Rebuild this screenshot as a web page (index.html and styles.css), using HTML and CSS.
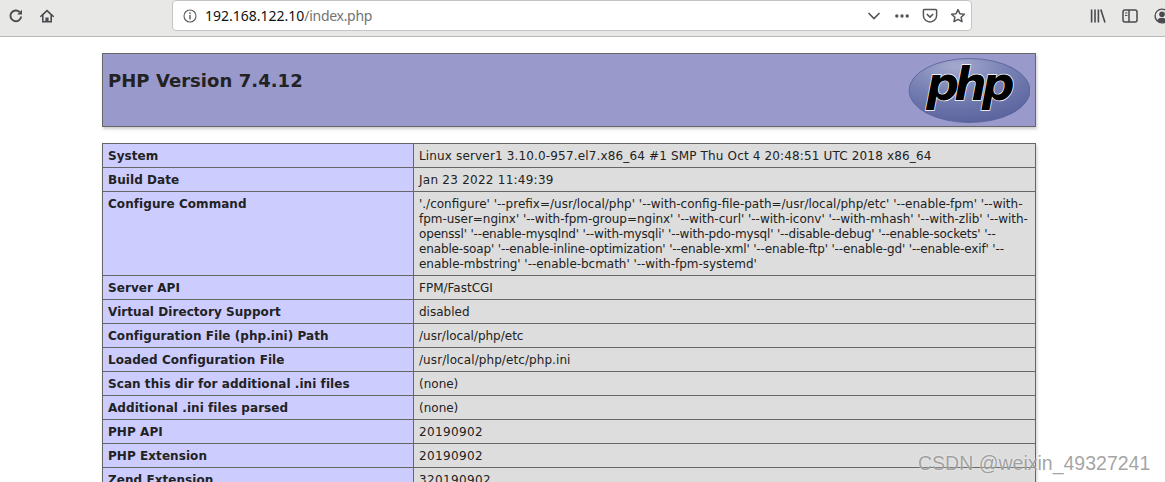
FILE: index.html
```html
<!DOCTYPE html>
<html lang="en">
<head>
<meta charset="utf-8">
<title>phpinfo()</title>
<link rel="stylesheet" href="styles.css">
</head>
<body>
<header class="toolbar">
  <div class="nav">
    <svg class="icon" viewBox="0 0 16 16"><path d="M13.2 8.5A5.4 5.4 0 1 1 11.6 4" fill="none" stroke="#4a4a4f" stroke-width="1.9"/><path d="M14 1.8V6.6H9.2Z" fill="#4a4a4f"/></svg>
    <svg class="icon" viewBox="0 0 16 16"><path d="M8 1.6 .8 8.2l1 1.1L3 8.3V14.6h10V8.3l1.2 1 1-1.1ZM4.6 13V6.9L8 3.8l3.4 3.1V13H9.6V9.6H6.4V13Z" fill="#4a4a4f"/></svg>
  </div>
  <div class="urlbar">
    <svg class="info-icon" viewBox="0 0 14 14"><circle cx="7" cy="7" r="6" fill="none" stroke="#5c5c60" stroke-width="1.1"/><circle cx="7" cy="4.1" r=".9" fill="#5c5c60"/><rect x="6.3" y="5.9" width="1.4" height="4.6" fill="#5c5c60"/></svg>
    <span class="url"><span class="host">192.168.122.10</span><span class="path">/index.php</span></span>
    <div class="url-actions">
      <svg class="icon" viewBox="0 0 16 16"><path d="M2.5 5 8 10.6 13.5 5" fill="none" stroke="#55555a" stroke-width="1.7"/></svg>
      <svg class="icon" viewBox="0 0 16 16"><circle cx="2.8" cy="8" r="1.7" fill="#55555a"/><circle cx="8" cy="8" r="1.7" fill="#55555a"/><circle cx="13.2" cy="8" r="1.7" fill="#55555a"/></svg>
      <svg class="icon" viewBox="0 0 16 16"><path d="M2.4 1.4h11.2c.6 0 1 .4 1 1v5a6.6 6.6 0 0 1-13.2 0v-5c0-.6.4-1 1-1Z" fill="none" stroke="#55555a" stroke-width="1.5"/><path d="M4.8 6 8 9l3.2-3" fill="none" stroke="#55555a" stroke-width="1.7"/></svg>
      <svg class="icon" viewBox="0 0 16 16"><path d="M8 1.6 9.9 5.7l4.5.5-3.3 3 .9 4.5L8 11.4l-4 2.3.9-4.5-3.3-3 4.5-.5Z" fill="none" stroke="#55555a" stroke-width="1.5" stroke-linejoin="round"/></svg>
    </div>
  </div>
  <div class="tools">
    <svg class="icon" viewBox="0 0 16 16"><path d="M1.6 1.5V14.5M5 1.5V14.5M8.4 1.5V14.5M10.8 1.6 15 14.5" fill="none" stroke="#4a4a4f" stroke-width="1.6"/></svg>
    <svg class="icon" viewBox="0 0 16 16"><rect x="1" y="2" width="14" height="12" rx="2" fill="none" stroke="#4a4a4f" stroke-width="1.5"/><path d="M7 2V14" stroke="#4a4a4f" stroke-width="1.5"/><path d="M3 5h2.4M3 7.5h2.4" stroke="#4a4a4f" stroke-width="1.2"/></svg>
    <svg class="icon" viewBox="0 0 16 16"><circle cx="8" cy="8" r="6.9" fill="none" stroke="#4a4a4f" stroke-width="1.4"/><circle cx="8" cy="6.3" r="2.8" fill="#4a4a4f"/><path d="M3 12.6C4 10.4 6 9.8 8 9.8s4 .6 5 2.8A6.6 6.6 0 0 1 8 14.8a6.6 6.6 0 0 1-5-2.2Z" fill="#4a4a4f"/></svg>
  </div>
</header>
<main class="center">
  <table class="info-head">
    <tr class="h"><td>
      <svg class="logo" viewBox="0 0 123 67" role="img" aria-label="PHP logo">
        <defs>
          <radialGradient id="lg" cx="38%" cy="12%" r="90%">
            <stop offset="0" stop-color="#a4a9ce"/>
            <stop offset=".5" stop-color="#7780b3"/>
            <stop offset="1" stop-color="#5a639c"/>
          </radialGradient>
        </defs>
        <ellipse cx="62.500" cy="33.5" rx="60.500" ry="32" fill="url(#lg)" stroke="#565f98" stroke-width=".8"/>
        <text class="logo-text" x="61" y="43" text-anchor="middle">php</text>
      </svg>
      <h1>PHP Version 7.4.12</h1>
    </td></tr>
  </table>
  <table class="info">
    <tr><td class="e">System</td><td class="v digits-a">Linux server1 3.10.0-957.el7.x86_64 #1 SMP Thu Oct 4 20:48:51 UTC 2018 x86_64</td></tr>
    <tr><td class="e">Build Date</td><td class="v digits-b">Jan 23 2022 11:49:39</td></tr>
    <tr><td class="e">Configure Command</td><td class="v cfg"><span class="ln ln-1">'./configure' '--prefix=/usr/local/php' '--with-config-file-path=/usr/local/php/etc' '--enable-fpm' '--with-</span><span class="ln ln-2">fpm-user=nginx' '--with-fpm-group=nginx' '--with-curl' '--with-iconv' '--with-mhash' '--with-zlib' '--with-</span><span class="ln ln-3">openssl' '--enable-mysqlnd' '--with-mysqli' '--with-pdo-mysql' '--disable-debug' '--enable-sockets' '--</span><span class="ln ln-4">enable-soap' '--enable-inline-optimization' '--enable-xml' '--enable-ftp' '--enable-gd' '--enable-exif' '--</span><span class="ln ln-5">enable-mbstring' '--enable-bcmath' '--with-fpm-systemd'</span></td></tr>
    <tr><td class="e">Server API</td><td class="v">FPM/FastCGI</td></tr>
    <tr><td class="e">Virtual Directory Support</td><td class="v">disabled</td></tr>
    <tr><td class="e">Configuration File (php.ini) Path</td><td class="v">/usr/local/php/etc</td></tr>
    <tr><td class="e">Loaded Configuration File</td><td class="v digits-d">/usr/local/php/etc/php.ini</td></tr>
    <tr><td class="e">Scan this dir for additional .ini files</td><td class="v">(none)</td></tr>
    <tr><td class="e">Additional .ini files parsed</td><td class="v">(none)</td></tr>
    <tr><td class="e">PHP API</td><td class="v digits-c">20190902</td></tr>
    <tr><td class="e">PHP Extension</td><td class="v digits-c">20190902</td></tr>
    <tr><td class="e">Zend Extension</td><td class="v digits-c">320190902</td></tr>
  </table>
</main>
<div class="watermark">CSDN @weixin_49327241</div>
</body>
</html>
```
FILE: styles.css
```css
html, body {
  margin: 0;
  height: 482px;
  overflow: hidden;
  background: #fff;
}
body {
  color: #222;
  font-family: "DejaVu Sans", sans-serif;
  position: relative;
}
.toolbar {
  height: 36px;
  display: flex;
  align-items: flex-start;
  background: #e8e8e7;
  border-bottom: 1px solid #b8b8b6;
  box-sizing: content-box;
}
.icon {
  width: 16px;
  height: 16px;
  flex: none;
}
.nav {
  display: flex;
  gap: 15px;
  padding: 8px 0 0 8px;
  width: 172px;
  flex: none;
  box-sizing: border-box;
}
.urlbar {
  width: 800px;
  height: 31px;
  flex: none;
  box-sizing: border-box;
  background: #fff;
  border: 1px solid #c4c4c2;
  border-radius: 4px;
  display: flex;
  align-items: center;
  padding: 0 5px 0 10px;
}
.info-icon {
  width: 14px;
  height: 14px;
  flex: none;
  margin-right: 8px;
}
.url {
  font-family: "Noto Sans", sans-serif;
  font-size: 14px;
  color: #737373;
  flex: 1;
}
.host { color: #111; }
.path { letter-spacing: -.3px; }
.url-actions {
  display: flex;
  gap: 12px;
}
.tools {
  display: flex;
  gap: 16px;
  padding: 8px 0 0 118px;
}
.center {
  width: 934px;
  margin: 16px 0 0 102px;
}
table {
  border-collapse: collapse;
  width: 934px;
  box-shadow: 1px 2px 3px #ccc;
  table-layout: fixed;
}
td {
  border: 1px solid #666;
  font-size: 12px;
  line-height: 15px;
  padding: 5px 5px 3px;
  vertical-align: baseline;
}
.info-head { margin-bottom: 16px; }
.h td {
  background: #99c;
  font-weight: bold;
  height: 64px;
  padding: 4px 5px;
  vertical-align: top;
}
.logo {
  float: right;
  width: 123px;
  height: 67px;
  margin: -1px 0 -2px 0;
}
.logo-text {
  font-family: "DejaVu Sans", sans-serif;
  font-style: italic;
  font-weight: bold;
  font-size: 46px;
  letter-spacing: -5px;
  fill: #000;
  stroke: #fff;
  stroke-width: 1.4px;
  paint-order: stroke;
}
h1 {
  font-size: 18px;
  margin: 12px 0;
  line-height: 21px;
  letter-spacing: .05px;
}
.e {
  background: #ccf;
  font-weight: bold;
  letter-spacing: .06px;
  width: 300px;
}
.v {
  background: #ddd;
  overflow-wrap: break-word;
}
.digits-a { letter-spacing: .154px; }
.digits-b { letter-spacing: .25px; }
.digits-c { letter-spacing: .37px; }
.digits-d { letter-spacing: .08px; }
.cfg { white-space: nowrap; }
.ln { display: block; }
.ln-2 { letter-spacing: -.03px; }
.ln-3 { letter-spacing: -.165px; }
.ln-4 { letter-spacing: -.145px; }
.ln-5 { letter-spacing: -.03px; }
.watermark {
  position: absolute;
  left: 918px;
  top: 452px;
  font-family: "Liberation Sans", sans-serif;
  font-size: 19.5px;
  color: rgba(140, 140, 140, .8);
  text-shadow: 0 0 2px rgba(255, 255, 255, .8);
  white-space: nowrap;
}
```
